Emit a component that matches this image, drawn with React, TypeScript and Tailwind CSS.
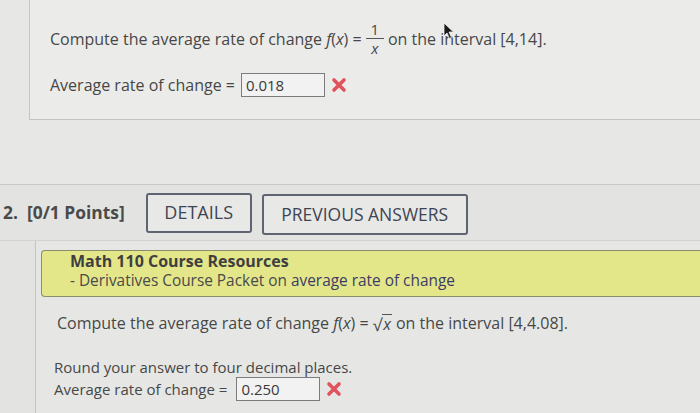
import React from 'react';

const XMark: React.FC = () => (
  <svg width="16" height="16" viewBox="0 0 16 16" className="ml-[6px]">
    <path d="M3 3 L13 13 M13 3 L3 13" stroke="#e0525c" strokeWidth="3.6" strokeLinecap="round" />
  </svg>
);

const AnswerBox: React.FC<{ value: string; gap: string }> = ({ value, gap }) => (
  <span className="inline-flex items-center">
    <span className={`${gap} inline-flex h-[24px] w-[84px] items-center border border-[#7a7c7e] bg-[#f1f2f1] pl-[4px] text-[15px] text-[#3a3a3a]`}>
      {value}
    </span>
    <XMark />
  </span>
);

const App: React.FC = () => {
  return (
    <div
      className="relative h-[413px] w-[700px] overflow-hidden bg-[#e7e8e6] text-[#474747]"
      style={{ fontFamily: '"Open Sans", "Noto Sans", sans-serif' }}
    >
      {/* previous question card */}
      <div className="ml-[29px] h-[120px] border-b border-l border-[#c4c5c3] bg-[#ebecea] pl-[20px] pt-[22px]">
        <div className="flex items-center text-[16px]">
          <span>Compute the average rate of change&nbsp;</span>
          <span className="italic">f</span>
          <span>(</span>
          <span className="italic">x</span>
          <span>)&nbsp;=&nbsp;</span>
          <span className="inline-flex flex-col items-center gap-[2px]">
            <span className="px-[3px] text-[15px] leading-[14px]">1</span>
            <span className="h-px w-[18px] bg-[#555]" />
            <span className="text-[15px] italic leading-[14px]">x</span>
          </span>
          <span>&nbsp;on the interval [4,14].</span>
        </div>
        <div className="mt-[18px] flex items-center text-[16px]">
          <span>Average rate of change =</span>
          <AnswerBox value="0.018" gap="ml-[6px]" />
        </div>
      </div>

      {/* question 2 */}
      <div className="mt-[64px] border-t border-[#c8c9c7] bg-[#e3e4e2]">
        <div className="flex h-[56px] items-center border-b border-[#d2d3d1]">
          <span className="ml-[3px] text-[17.4px] font-bold text-[#4a4a4a]">2.&nbsp; [0/1 Points]</span>
          <button className="ml-[21px] h-[40px] w-[106px] rounded-[3px] border-2 border-[#5e6472] bg-[#e8e9e7] text-[18px] text-[#3f4452]">
            DETAILS
          </button>
          <button className="ml-[10px] mt-[3px] h-[41px] w-[206px] rounded-[3px] border-2 border-[#5e6472] bg-[#e8e9e7] text-[17.5px] text-[#3f4452]">
            PREVIOUS ANSWERS
          </button>
        </div>
        <div className="ml-[35px] h-[200px] border-l border-[#c4c5c3] bg-[#e6e7e5] pt-[9px]">
          <div className="ml-[5px] h-[47px] rounded-l-[4px] border border-r-0 border-[#8c8d6a] bg-[#e4e68a] pl-[28px] pt-[1px] text-[15.4px] leading-[19px]">
            <div className="text-[16px] font-bold text-[#3f3f3f]">Math 110 Course Resources</div>
            <div className="text-[#4a4a4a]">
              - Derivatives Course Packet on <span className="text-[#3c3c64]">average rate of change</span>
            </div>
          </div>
          <div className="mt-[14px] flex items-center pl-[21px] text-[16px]">
            <span>Compute the average rate of change&nbsp;</span>
            <span className="italic">f</span>
            <span>(</span>
            <span className="italic">x</span>
            <span>)&nbsp;=&nbsp;</span>
            <span className="inline-flex items-end">
              <span className="text-[17px] leading-none">√</span>
              <span className="border-t border-[#555] px-[1px] italic leading-[18px]">x</span>
            </span>
            <span>&nbsp;on the interval [4,4.08].</span>
          </div>
          <div className="mt-[22px] pl-[18px] text-[15px] leading-[20px]">Round your answer to four decimal places.</div>
          <div className="flex items-center pl-[18px] text-[15px]">
            <span>Average rate of change =</span>
            <AnswerBox value="0.250" gap="ml-[9px]" />
          </div>
        </div>
      </div>

      {/* mouse pointer on the screen */}
      <svg className="absolute left-[443px] top-[22px]" width="12" height="18" viewBox="0 0 12 18">
        <path d="M1 1 L1 14 L4 11 L6.5 16.5 L8.5 15.5 L6 10 L10.5 10 Z" fill="#1a1a1a" stroke="#f0f0f0" strokeWidth="0.8" />
      </svg>
    </div>
  );
};

export default App;
